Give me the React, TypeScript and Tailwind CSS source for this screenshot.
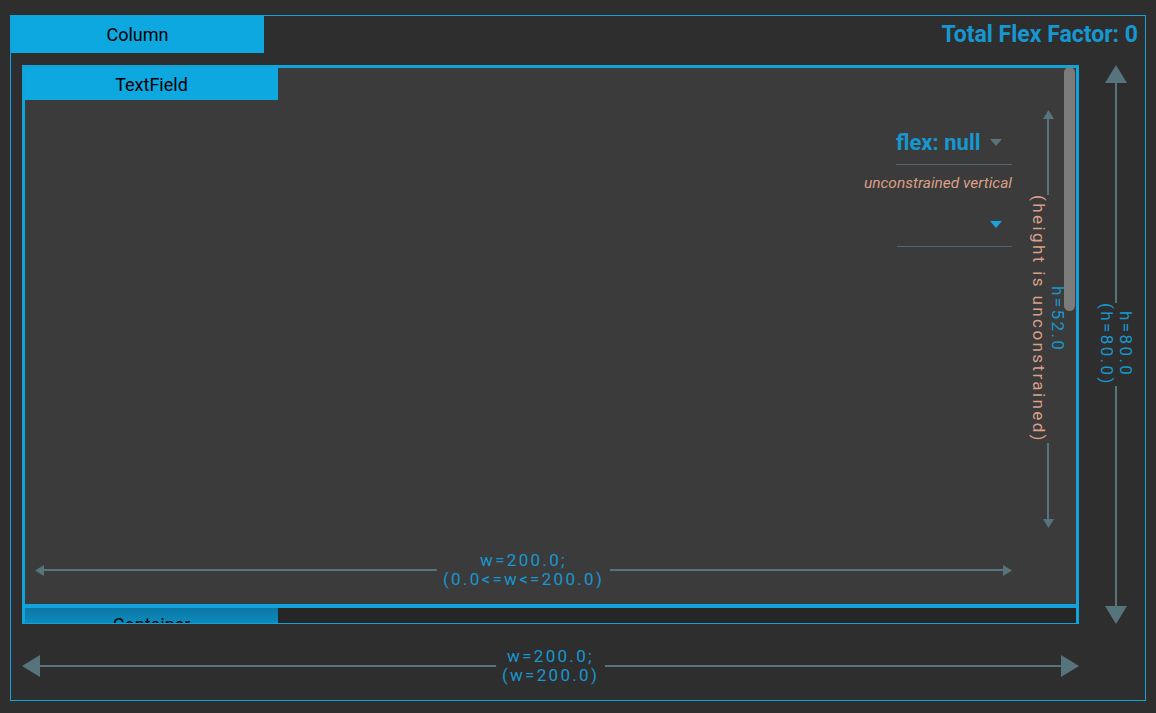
import React from "react";

const ARROW = "#57737c";

function Head({ dir, big }: { dir: "left" | "right" | "up" | "down"; big: boolean }) {
  const L = big ? 18 : 9;
  const W = big ? 22 : 11;
  if (dir === "left" || dir === "right") {
    const pts = dir === "left" ? `0,${W / 2} ${L},0 ${L},${W}` : `${L},${W / 2} 0,0 0,${W}`;
    return (
      <svg width={L} height={W} viewBox={`0 0 ${L} ${W}`} className="shrink-0 block">
        <polygon points={pts} fill={ARROW} />
      </svg>
    );
  }
  const pts = dir === "up" ? `${W / 2},0 0,${L} ${W},${L}` : `${W / 2},${L} 0,0 ${W},0`;
  return (
    <svg width={W} height={L} viewBox={`0 0 ${W} ${L}`} className="shrink-0 block">
      <polygon points={pts} fill={ARROW} />
    </svg>
  );
}

function HArrow({ big, children }: { big: boolean; children: React.ReactNode }) {
  return (
    <div className="flex items-center h-[38px]">
      <Head dir="left" big={big} />
      <div className="flex-1 h-[2px] bg-[#57737c]" />
      <div className="px-[6px] text-center whitespace-nowrap leading-[19px] text-[17px] tracking-[2.3px] text-[#1797d0]">
        {children}
      </div>
      <div className="flex-1 h-[2px] bg-[#57737c]" />
      <Head dir="right" big={big} />
    </div>
  );
}

function VArrow({ big, children }: { big: boolean; children: React.ReactNode }) {
  return (
    <div className="flex flex-col items-center h-full">
      <Head dir="up" big={big} />
      <div className="flex-1 w-[2px] bg-[#57737c]" />
      <div className="py-[8px] [writing-mode:vertical-rl] text-center whitespace-nowrap leading-[19px] text-[17px] tracking-[2.4px] text-[#1797d0]">
        {children}
      </div>
      <div className="flex-1 w-[2px] bg-[#57737c]" />
      <Head dir="down" big={big} />
    </div>
  );
}

export default function App() {
  return (
    <div className="w-[1156px] h-[713px] bg-[#2e2e2e] pt-[15px] pl-[10px] [font-family:Roboto,sans-serif] overflow-hidden">
      <div className="w-[1136px] h-[686px] border border-[#12a3db] flex flex-col">
        {/* header */}
        <div className="h-[37px] flex items-center justify-between shrink-0">
          <div className="w-[253px] h-full bg-[#0ea8e0] flex items-center justify-center text-[18px] text-black">
            Column
          </div>
          <div className="pr-[7px] pt-[2px] text-[23px] font-bold text-[#1797d0]">Total Flex Factor: 0</div>
        </div>

        {/* body */}
        <div className="mt-[12px] ml-[11px] grid grid-cols-[1057px_auto] grid-rows-[559px_auto]">
          {/* child box */}
          <div className="border border-[#12a3db] overflow-hidden flex flex-col">
            {/* TextField */}
            <div className="relative h-[540px] shrink-0 border-2 border-[#12a3db] bg-[#3b3b3b] flex flex-col">
              <div className="w-[253px] h-[32px] shrink-0 bg-[#0ea8e0] flex items-center justify-center text-[18px] text-black">
                TextField
              </div>
              <div className="flex-1 flex pl-[10px] pr-[10px]">
                <div className="flex-1 flex flex-col">
                  <div className="self-end w-[116px] mt-[21px] flex flex-col">
                    <div className="h-[44px] flex items-center justify-between pr-[10px] border-b border-[#4e6770]">
                      <span className="text-[22px] font-bold text-[#1797d0] leading-none">flex: null</span>
                      <svg width="12" height="7" viewBox="0 0 12 7" className="block">
                        <polygon points="0,0 12,0 6,7" fill={ARROW} />
                      </svg>
                    </div>
                    <div className="h-[38px] flex items-center justify-end whitespace-nowrap italic text-[15.5px] text-[#d99f88]">
                      unconstrained vertical
                    </div>
                    <div className="h-[44px] flex items-center justify-end pr-[10px] border-b border-[#4e6770] ml-[1px]">
                      <svg width="12" height="7" viewBox="0 0 12 7" className="block">
                        <polygon points="0,0 12,0 6,7" fill="#1aa3dc" />
                      </svg>
                    </div>
                  </div>
                  <div className="flex-1" />
                  <div className="mb-[15px]">
                    <HArrow big={false}>
                      w=200.0;
                      <br />
                      (0.0&lt;=w&lt;=200.0)
                    </HArrow>
                  </div>
                </div>
                <div className="w-[18px]" />
                <div className="w-[36px] mt-[10px] h-[418px]">
                  <VArrow big={false}>
                    h=52.0
                    <br />
                    <span className="text-[#d99f88]">(height is unconstrained)</span>
                  </VArrow>
                </div>
              </div>
              {/* scrollbar */}
              <div className="absolute right-[1px] top-[-1px] w-[11px] h-[244px] rounded-full bg-[#7b7b7b]" />
            </div>
            {/* Container */}
            <div className="flex-1 border-2 border-[#12a3db] bg-[#262626]">
              <div className="w-[253px] h-[32px] bg-linear-to-b from-[#0b77a5] to-[#0fa3da] flex items-center justify-center text-[18px] text-black">
                Container
              </div>
            </div>
          </div>

          {/* right vertical arrow */}
          <div className="ml-[17px] w-[40px] h-[559px]">
            <VArrow big={true}>
              h=80.0
              <br />
              (h=80.0)
            </VArrow>
          </div>

          {/* bottom arrow */}
          <div className="mt-[23px]">
            <HArrow big={true}>
              w=200.0;
              <br />
              (w=200.0)
            </HArrow>
          </div>
        </div>
      </div>
    </div>
  );
}
